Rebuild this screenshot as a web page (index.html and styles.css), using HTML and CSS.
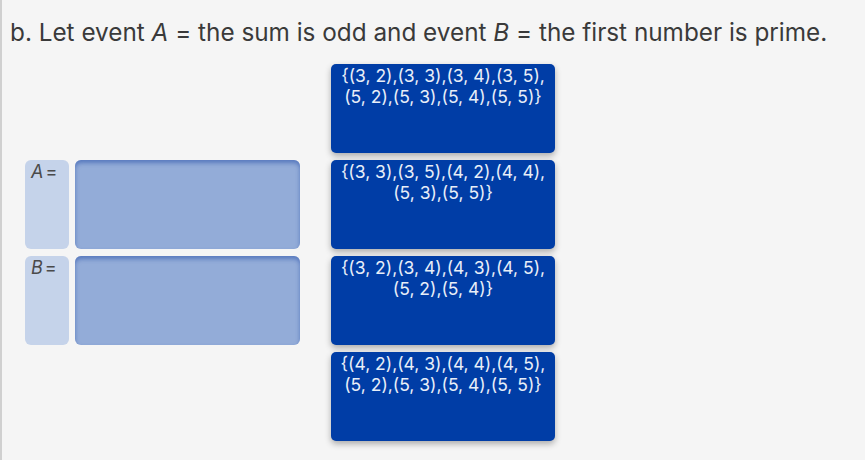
FILE: index.html
```html
<!DOCTYPE html>
<html lang="en">
<head>
<meta charset="UTF-8">
<title>Events - Drag and Drop</title>
<link rel="stylesheet" href="styles.css">
</head>
<body>
<main class="page">
    <p class="question">b. Let event <i>A</i> = the sum is odd and event <i>B</i> = the first number is prime.</p>

    <div class="board">
        <div class="card card-1">{(3, 2),(3, 3),(3, 4),(3, 5),<br>(5, 2),(5, 3),(5, 4),(5, 5)}</div>

        <div class="label row-2"><i>A</i>=</div>
        <div class="drop row-2"></div>
        <div class="card row-2">{(3, 3),(3, 5),(4, 2),(4, 4),<br>(5, 3),(5, 5)}</div>

        <div class="label row-3"><i>B</i>=</div>
        <div class="drop row-3"></div>
        <div class="card row-3">{(3, 2),(3, 4),(4, 3),(4, 5),<br>(5, 2),(5, 4)}</div>

        <div class="card row-4">{(4, 2),(4, 3),(4, 4),(4, 5),<br>(5, 2),(5, 3),(5, 4),(5, 5)}</div>
    </div>
</main>
</body>
</html>
```

FILE: styles.css
```css
body {
    margin: 0;
    background: #f5f5f5;
    font-family: Inter, "Noto Sans", sans-serif;
    color: #333;
}
.page {
    border-left: 2px solid #d0d0d0;
    min-height: 460px;
    box-sizing: border-box;
    padding: 18px 10px 0 8px;
}
.question {
    margin: 0;
    font-size: 24.3px;
    line-height: 29px;
    color: #3a3a3a;
}
.board {
    display: grid;
    grid-template-columns: 44px 225px 255px;
    grid-auto-rows: 89px;
    column-gap: 6px;
    row-gap: 7px;
    margin-top: 17px;
    margin-left: 15px;
}
.row-2 { grid-row: 2; }
.row-3 { grid-row: 3; }
.row-4 { grid-row: 4; }
.card-1 { grid-row: 1; }
.label {
    grid-column: 1;
    background: #c5d3ea;
    border-radius: 6px;
    font-size: 18px;
    line-height: 20px;
    color: #4a4a4a;
    padding: 2px 0 0 6px;
}
.label i {
    margin-right: 2px;
}
.drop {
    grid-column: 2;
    background: #93acd8;
    border-radius: 6px;
    box-shadow: inset 0 3px 4px rgba(40, 80, 170, 0.55);
}
.card {
    grid-column: 3;
    width: 224px;
    margin-left: 25px;
    background: #003da6;
    border-radius: 5px;
    box-shadow: 0 3px 6px rgba(0, 0, 0, 0.3);
    color: #e8eef8;
    font-size: 17.5px;
    line-height: 21px;
    text-align: center;
    padding-top: 1px;
    box-sizing: border-box;
}
```
